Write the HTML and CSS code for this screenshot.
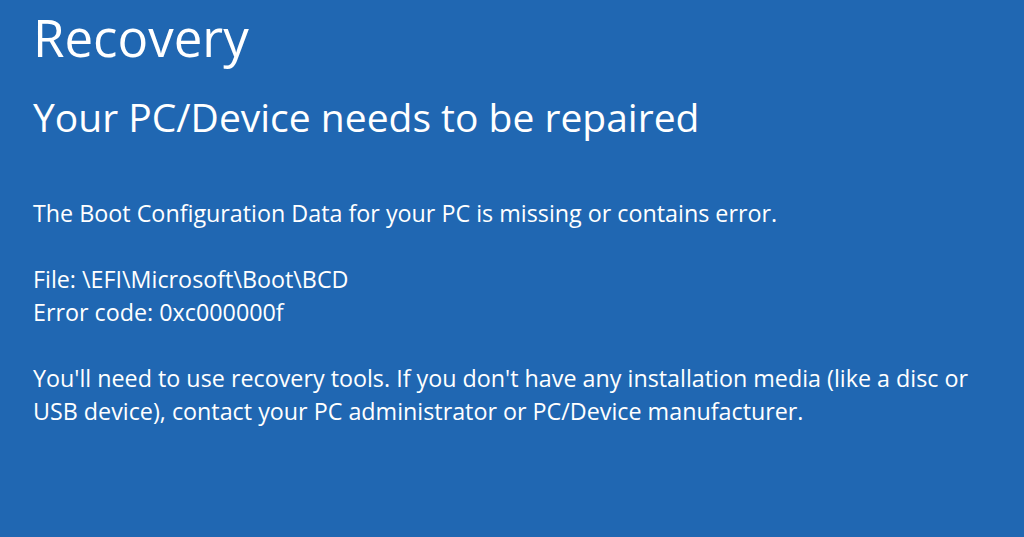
FILE: index.html
```html
<!DOCTYPE html>
<html lang="en">
<head>
<meta charset="utf-8">
<title>Recovery</title>
<link rel="stylesheet" href="styles.css">
</head>
<body>
<main class="screen">
  <h1 class="title">Recovery</h1>
  <h2 class="subtitle">Your PC/Device needs to be repaired</h2>
  <p class="para">The Boot Configuration Data for your PC is missing or contains error.</p>
  <p class="para">File: \EFI\Microsoft\Boot\BCD<br>Error code: 0xc000000f</p>
  <p class="para">You'll need to use recovery tools. If you don't have any installation media (like a disc or USB device), contact your PC administrator or PC/Device manufacturer.</p>
</main>
</body>
</html>
```
FILE: styles.css
```css
html, body {
  margin: 0;
  padding: 0;
  height: 100%;
  background: #2067b2;
}
.screen {
  box-sizing: border-box;
  height: 537px;
  padding: 5px 0 0 33px;
  color: #ffffff;
  font-family: "Open Sans", "Noto Sans", sans-serif;
  overflow: hidden;
}
.title {
  margin: 0;
  font-size: 51px;
  font-weight: 400;
  line-height: 64px;
}
.subtitle {
  margin: 25px 0 0 0;
  font-size: 39px;
  font-weight: 400;
  line-height: 46px;
}
.para {
  margin: 0;
  width: 950px;
  font-size: 23.3px;
  line-height: 33px;
}
.subtitle + .para { margin-top: 57px; }
.para + .para { margin-top: 33px; }
```
